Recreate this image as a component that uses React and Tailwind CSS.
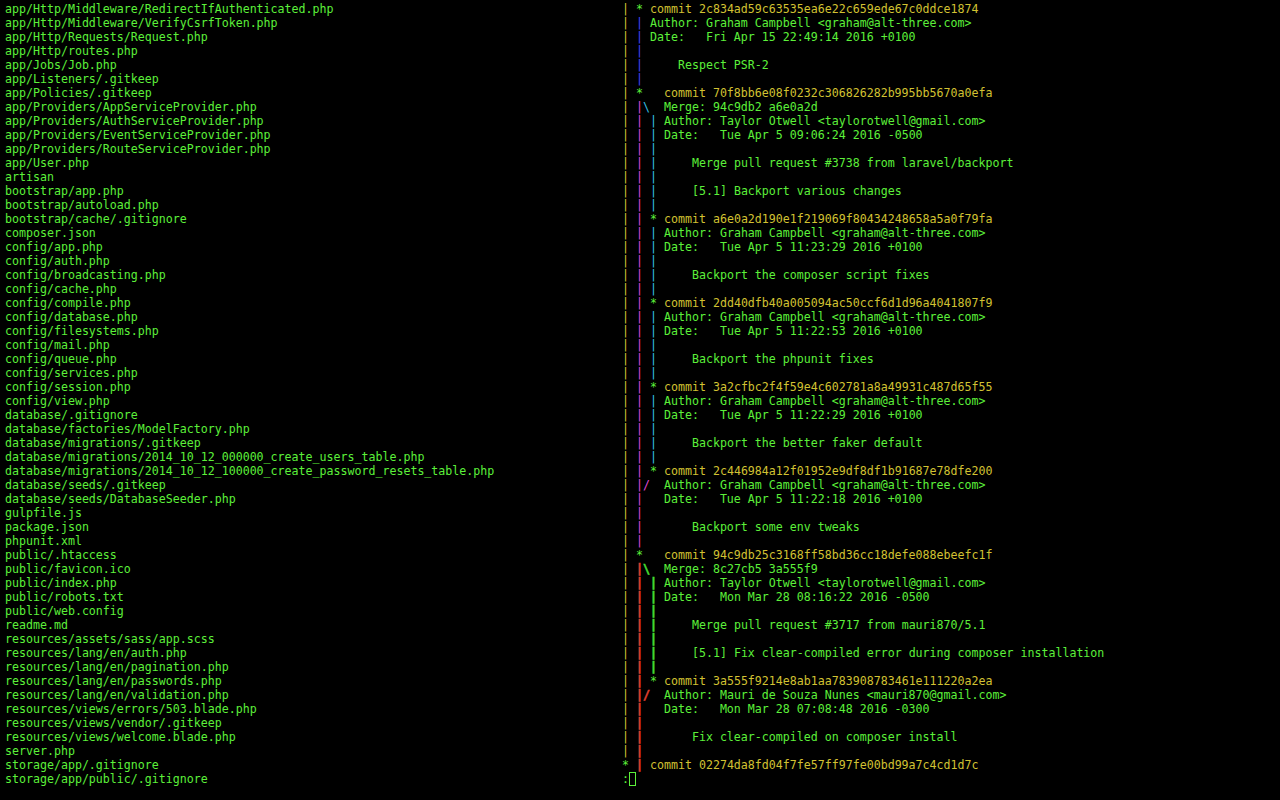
import React from "react";

const files = [
  "app/Http/Middleware/RedirectIfAuthenticated.php",
  "app/Http/Middleware/VerifyCsrfToken.php",
  "app/Http/Requests/Request.php",
  "app/Http/routes.php",
  "app/Jobs/Job.php",
  "app/Listeners/.gitkeep",
  "app/Policies/.gitkeep",
  "app/Providers/AppServiceProvider.php",
  "app/Providers/AuthServiceProvider.php",
  "app/Providers/EventServiceProvider.php",
  "app/Providers/RouteServiceProvider.php",
  "app/User.php",
  "artisan",
  "bootstrap/app.php",
  "bootstrap/autoload.php",
  "bootstrap/cache/.gitignore",
  "composer.json",
  "config/app.php",
  "config/auth.php",
  "config/broadcasting.php",
  "config/cache.php",
  "config/compile.php",
  "config/database.php",
  "config/filesystems.php",
  "config/mail.php",
  "config/queue.php",
  "config/services.php",
  "config/session.php",
  "config/view.php",
  "database/.gitignore",
  "database/factories/ModelFactory.php",
  "database/migrations/.gitkeep",
  "database/migrations/2014_10_12_000000_create_users_table.php",
  "database/migrations/2014_10_12_100000_create_password_resets_table.php",
  "database/seeds/.gitkeep",
  "database/seeds/DatabaseSeeder.php",
  "gulpfile.js",
  "package.json",
  "phpunit.xml",
  "public/.htaccess",
  "public/favicon.ico",
  "public/index.php",
  "public/robots.txt",
  "public/web.config",
  "readme.md",
  "resources/assets/sass/app.scss",
  "resources/lang/en/auth.php",
  "resources/lang/en/pagination.php",
  "resources/lang/en/passwords.php",
  "resources/lang/en/validation.php",
  "resources/views/errors/503.blade.php",
  "resources/views/vendor/.gitkeep",
  "resources/views/welcome.blade.php",
  "server.php",
  "storage/app/.gitignore",
  "storage/app/public/.gitignore",
];

const COLORS = {
  g: "text-[#5cf03a]",
  y: "text-[#d2c232]",
  b: "text-[#4444ff]",
  m: "text-[#e048d8]",
  c: "text-[#34c0e8]",
  r: "font-bold text-[#e04030] [-webkit-text-stroke:0.5px_#e04030]",
  G: "font-bold text-[#48e034] [-webkit-text-stroke:0.5px_#48e034]",
};

const Y = ["|", "y"];
const S = [" ", "g"];
const ST = ["*", "g"];
const com = (h) => ["commit " + h, "y"];
const t = (s) => [s, "g"];

const ga = "Author: Graham Campbell <graham@alt-three.com>";
const ta = "Author: Taylor Otwell <taylorotwell@gmail.com>";

const yb = (rest) => [Y, S, ["|", "b"], ...(rest ? [S, t(rest)] : [])];
const ymc = (rest) => [Y, S, ["|", "m"], S, ["|", "c"], ...(rest ? [S, t(rest)] : [])];
const ymStar = (h) => [Y, S, ["|", "m"], S, ST, S, com(h)];
const ym = (rest) => [Y, S, ["|", "m"], ...(rest ? [t(rest)] : [])];
const yrG = (rest) => [Y, S, ["|", "r"], S, ["|", "G"], ...(rest ? [S, t(rest)] : [])];
const yr = (rest) => [Y, S, ["|", "r"], ...(rest ? [t(rest)] : [])];

const graph = [
  [Y, S, ST, S, com("2c834ad59c63535ea6e22c659ede67c0ddce1874")],
  yb(ga),
  yb("Date:   Fri Apr 15 22:49:14 2016 +0100"),
  yb(),
  yb("    Respect PSR-2"),
  yb(),
  [Y, S, ST, ["   "], com("70f8bb6e08f0232c306826282b995bb5670a0efa")],
  [Y, S, ["|", "m"], ["\\", "c"], ["  "], t("Merge: 94c9db2 a6e0a2d")],
  ymc(ta),
  ymc("Date:   Tue Apr 5 09:06:24 2016 -0500"),
  ymc(),
  ymc("    Merge pull request #3738 from laravel/backport"),
  ymc(),
  ymc("    [5.1] Backport various changes"),
  ymc(),
  ymStar("a6e0a2d190e1f219069f80434248658a5a0f79fa"),
  ymc(ga),
  ymc("Date:   Tue Apr 5 11:23:29 2016 +0100"),
  ymc(),
  ymc("    Backport the composer script fixes"),
  ymc(),
  ymStar("2dd40dfb40a005094ac50ccf6d1d96a4041807f9"),
  ymc(ga),
  ymc("Date:   Tue Apr 5 11:22:53 2016 +0100"),
  ymc(),
  ymc("    Backport the phpunit fixes"),
  ymc(),
  ymStar("3a2cfbc2f4f59e4c602781a8a49931c487d65f55"),
  ymc(ga),
  ymc("Date:   Tue Apr 5 11:22:29 2016 +0100"),
  ymc(),
  ymc("    Backport the better faker default"),
  ymc(),
  ymStar("2c446984a12f01952e9df8df1b91687e78dfe200"),
  [Y, S, ["|", "m"], ["/", "m"], ["  "], t(ga)],
  ym("   Date:   Tue Apr 5 11:22:18 2016 +0100"),
  ym(),
  ym("       Backport some env tweaks"),
  ym(),
  [Y, S, ST, ["   "], com("94c9db25c3168ff58bd36cc18defe088ebeefc1f")],
  [Y, S, ["|", "r"], ["\\", "G"], ["  "], t("Merge: 8c27cb5 3a555f9")],
  yrG(ta),
  yrG("Date:   Mon Mar 28 08:16:22 2016 -0500"),
  yrG(),
  yrG("    Merge pull request #3717 from mauri870/5.1"),
  yrG(),
  yrG("    [5.1] Fix clear-compiled error during composer installation"),
  yrG(),
  [Y, S, ["|", "r"], S, ST, S, com("3a555f9214e8ab1aa783908783461e111220a2ea")],
  [Y, S, ["|", "r"], ["/", "r"], ["  "], t("Author: Mauri de Souza Nunes <mauri870@gmail.com>")],
  yr("   Date:   Mon Mar 28 07:08:48 2016 -0300"),
  yr(),
  yr("       Fix clear-compiled on composer install"),
  yr(),
  [ST, S, ["|", "r"], S, com("02274da8fd04f7fe57ff97fe00bd99a7c4cd1d7c")],
];

const mono = "font-['DejaVu_Sans_Mono',monospace] text-[11.627px] leading-[14px] whitespace-pre";

export default function App() {
  return (
    <div className={"w-[1280px] h-[800px] bg-black flex overflow-hidden " + mono}>
      <div className="w-[622px] pl-[5px] pt-[2px] flex flex-col text-[#5cf03a]">
        {files.map((f, i) => (
          <div key={i} className="h-[14px]">{f}</div>
        ))}
      </div>
      <div className="flex-1 pt-[2px] flex flex-col">
        {graph.map((row, i) => (
          <div key={i} className="h-[14px]">
            {row.map((seg, j) => (
              <span key={j} className={COLORS[seg[1] || "g"]}>{seg[0]}</span>
            ))}
          </div>
        ))}
        <div className="h-[14px] flex items-center text-[#5cf03a]">
          <span>:</span>
          <span className="inline-block w-[7px] h-[14px] border border-[#5cf03a]"></span>
        </div>
      </div>
    </div>
  );
}
